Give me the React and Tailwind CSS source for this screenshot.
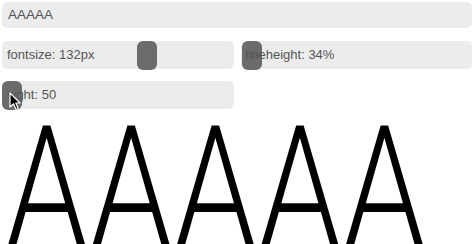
import React, { useState } from "react";

const Slider = ({ label, offset }) => {
  return (
    <div className="relative flex-1 h-[28px] rounded-[5px] bg-[#ececec] flex items-center">
      <div className="absolute top-0 w-[20px] h-[29px] rounded-[6px] bg-[#6b6b6b]" style={{ left: offset }} />
      <p className="relative pl-[5px] text-[13px] text-[#555] font-['Liberation_Sans',Arial,sans-serif] whitespace-nowrap">{label}</p>
    </div>
  );
};

const App = () => {
  const [text] = useState("AAAAA");

  return (
    <div className="w-[474px] h-[244px] overflow-hidden bg-white p-[2px] relative">
      <div className="h-[26px] rounded-[5px] bg-[#ececec] flex items-center px-[6px]">
        <p className="text-[13.5px] text-[#555] font-['Liberation_Sans',Arial,sans-serif]">{text}</p>
      </div>

      <div className="flex flex-row gap-[7px] mt-[13px]">
        <Slider label={"fontsize: 132px"} offset={135} />
        <Slider label={"lineheight: 34%"} offset={1} />
      </div>

      <div className="flex flex-row mt-[12px] w-[232px]">
        <Slider label={"wght: 50"} offset={0} />
      </div>

      <div className="mt-[3px] h-[140px]">
        <p className="font-['Roboto',sans-serif] font-light text-[169px] leading-[152px] tracking-[4px] text-black whitespace-nowrap origin-left scale-x-[0.77] ml-[4px]">{text}</p>
      </div>

      <svg className="absolute left-[9px] top-[92px]" width="12" height="19" viewBox="0 0 12 19">
        <path d="M1 1 L1 15 L4.5 11.8 L7 17.5 L9.2 16.5 L6.8 11 L11 11 Z" fill="black" stroke="white" strokeWidth="1.2" strokeLinejoin="round" />
      </svg>
    </div>
  );
};

export default App;
